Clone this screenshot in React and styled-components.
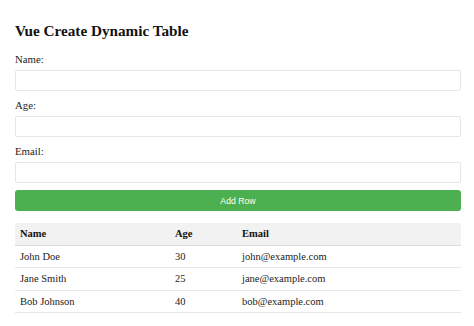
import React from 'react';
import styled, { createGlobalStyle } from 'styled-components';

const GlobalStyle = createGlobalStyle`
  body {
    margin: 0;
    background: #fff;
    font-family: "Liberation Serif", "Times New Roman", serif;
    color: #222;
  }
`;

const Page = styled.div`
  width: 446px;
  padding: 22px 13px 0 15px;
`;

const Title = styled.h2`
  margin: 0 0 12.5px;
  font-size: 15.2px;
  line-height: 18px;
  font-weight: bold;
  color: #111;
`;

const Form = styled.form`
  display: flex;
  flex-direction: column;
`;

const Label = styled.label`
  display: block;
  font-size: 10.8px;
  line-height: 12px;
  margin-bottom: 5.5px;
  color: #222;
`;

const Input = styled.input`
  box-sizing: border-box;
  width: 100%;
  height: 21px;
  margin: 0 0 7.5px;
  border: 1px solid #e6e6e6;
  border-radius: 2px;
  background: #fff;
  outline: none;
`;

const Button = styled.button`
  height: 21px;
  margin-top: -0.5px;
  border: none;
  border-radius: 3px;
  background: #4caf50;
  color: #fff;
  font-family: "Liberation Sans", Arial, sans-serif;
  font-size: 8.7px;
  cursor: pointer;
`;

const Table = styled.table`
  width: 100%;
  margin-top: 12px;
  border-collapse: collapse;
  font-size: 10.5px;
`;

const Head = styled.th`
  box-sizing: border-box;
  height: 22px;
  padding: 0 5px;
  text-align: left;
  font-weight: bold;
  background: #f2f2f2;
  border-bottom: 1px solid #dcdcdc;
  width: ${p => p.w || 'auto'};
  color: #111;
`;

const Cell = styled.td`
  height: 21.5px;
  padding: 0 5px;
  border-bottom: 1px solid #e8e8e8;
  color: #222;
`;

const rows = [
  { name: 'John Doe', age: 30, email: 'john@example.com' },
  { name: 'Jane Smith', age: 25, email: 'jane@example.com' },
  { name: 'Bob Johnson', age: 40, email: 'bob@example.com' },
];

export default function App() {
  const [data, setData] = React.useState(rows);
  const [form, setForm] = React.useState({ name: '', age: '', email: '' });

  const handleAdd = (e) => {
    e.preventDefault();
    if (!form.name) return;
    setData(prev => [...prev, { ...form }]);
    setForm({ name: '', age: '', email: '' });
  };

  return (
    <>
      <GlobalStyle />
      <Page>
        <Title>Vue Create Dynamic Table</Title>
        <Form onSubmit={handleAdd}>
          <Label>Name:</Label>
          <Input value={form.name} onChange={e => setForm({ ...form, name: e.target.value })} />
          <Label>Age:</Label>
          <Input value={form.age} onChange={e => setForm({ ...form, age: e.target.value })} />
          <Label>Email:</Label>
          <Input value={form.email} onChange={e => setForm({ ...form, email: e.target.value })} />
          <Button type="submit">Add Row</Button>
        </Form>
        <Table>
          <thead>
            <tr>
              <Head w="155px">Name</Head>
              <Head w="67px">Age</Head>
              <Head>Email</Head>
            </tr>
          </thead>
          <tbody>
            {data.map((r, i) => (
              <tr key={i}>
                <Cell>{r.name}</Cell>
                <Cell>{r.age}</Cell>
                <Cell>{r.email}</Cell>
              </tr>
            ))}
          </tbody>
        </Table>
      </Page>
    </>
  );
}
